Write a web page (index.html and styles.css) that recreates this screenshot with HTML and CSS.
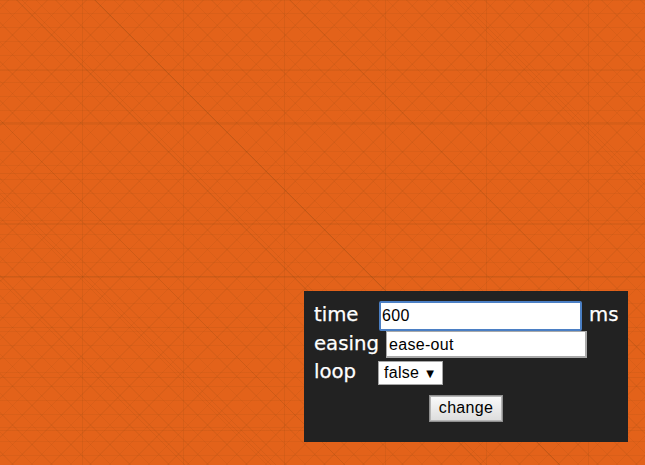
FILE: index.html
```html
<!DOCTYPE html>
<html lang="en">
<head>
<meta charset="utf-8">
<title>Animation settings</title>
<link rel="stylesheet" href="styles.css">
</head>
<body>
<form class="panel">
  <div class="row row-time">
    <label class="label label-time" for="time">time</label>
    <input class="field field-time" id="time" type="text" value="600">
    <span class="label unit">ms</span>
  </div>
  <div class="row row-easing">
    <label class="label label-easing" for="easing">easing</label>
    <input class="field field-easing" id="easing" type="text" value="ease-out">
  </div>
  <div class="row row-loop">
    <label class="label label-loop" for="loop">loop</label>
    <span class="select" id="loop">false<span class="arrow">▼</span></span>
  </div>
  <div class="actions">
    <button class="change" type="button">change</button>
  </div>
</form>
</body>
</html>
```

FILE: styles.css
```css
* { box-sizing: border-box; }
html, body { height: 100%; }
body {
  --line: rgba(110, 60, 10, .08);
  --accent: rgba(110, 60, 10, .1);
  --strong: rgba(110, 60, 10, .2);
  margin: 0;
  overflow: hidden;
  display: flex;
  justify-content: flex-end;
  align-items: flex-end;
  padding: 0 17px 23px 0;
  background-color: #e3621a;
  background-image:
    linear-gradient(45deg, transparent 395.4px, var(--strong) 395.4px 396.6px, transparent 396.6px),
    linear-gradient(45deg,
      transparent 130.3px, var(--accent) 130.3px 131.3px, transparent 131.3px 133.9px, var(--accent) 133.9px 134.9px,
      transparent 134.9px 191.1px, var(--accent) 191.1px 192.1px, transparent 192.1px 194.7px, var(--accent) 194.7px 195.7px,
      transparent 195.7px 243.4px, var(--accent) 243.4px 244.4px,
      transparent 244.4px 340.3px, var(--accent) 340.3px 341.3px, transparent 341.3px 343.9px, var(--accent) 343.9px 344.9px,
      transparent 344.9px 533.4px, var(--accent) 533.4px 534.4px,
      transparent 534.4px 650px, var(--accent) 650px 651px, transparent 651px 653.6px, var(--accent) 653.6px 654.6px,
      transparent 654.6px),
    repeating-linear-gradient(45deg, transparent 0 9px, var(--line) 9px 10px, transparent 10px 13.789px),
    repeating-linear-gradient(-45deg, transparent 0 6.2px, var(--line) 6.2px 7.2px, transparent 7.2px 13.789px),
    repeating-linear-gradient(180deg, var(--line) 0 .5px, transparent .5px 13.3px, var(--line) 13.3px 13.8px),
    repeating-linear-gradient(180deg, transparent 0 19.5px, var(--accent) 19.5px 20.5px, transparent 20.5px 69.5px, var(--accent) 69.5px 71px, transparent 71px 122.5px, var(--accent) 122.5px 124px, transparent 124px 153.5px),
    repeating-linear-gradient(90deg, transparent 0 81.6px, var(--accent) 81.6px 82.6px, transparent 82.6px 101.2px);
}
.panel {
  width: 324px;
  height: 151px;
  padding: 10px 0 0 10px;
  background: #222;
  color: #fff;
  font-family: "DejaVu Sans", sans-serif;
  font-size: 19.7px;
}
.row { display: flex; align-items: center; }
.label { line-height: 24px; -webkit-text-stroke: .25px #fff; }
.label-time { width: 65px; margin-bottom: 3px; }
.label-easing { width: 72px; margin-bottom: 2px; }
.label-loop { width: 64px; margin-bottom: 3px; }
.field, .select, .change {
  font-family: "Liberation Sans", sans-serif;
  font-size: 16px;
  letter-spacing: .3px;
  color: #000;
}
.field {
  display: block;
  flex: none;
  background: #fff;
  outline: 0;
  padding: 0 2px;
  border-radius: 0;
}
.row-time { height: 30px; }
.field-time {
  width: 203px;
  height: 30px;
  border: 2px solid #4b7fc4;
  border-radius: 2px;
  padding: 0 1px;
}
.unit { margin: 0 0 3px 7px; }
.row-easing { height: 27px; }
.field-easing {
  width: 201px;
  height: 27px;
  padding-top: 1px;
  border-style: solid;
  border-width: 1px 2px 2px 1px;
  border-color: #a9a9a9;
}
.row-loop { height: 24px; margin-top: 3px; }
.select {
  display: flex;
  align-items: center;
  width: 65px;
  height: 24px;
  padding-left: 5px;
  background: #fff;
  border: 1px solid #a6a6a6;
}
.arrow { font-size: 10px; margin-left: 7px; font-family: "DejaVu Sans", sans-serif; }
.actions { display: flex; justify-content: center; margin-top: 10px; width: 304px; }
.change {
  width: 74px;
  height: 27px;
  padding: 0 0 2px;
  border: 1px solid #8f8f8f;
  box-shadow: inset 0 0 0 1px #b5b5b5;
  background: linear-gradient(#fbfbfb, #dcdcdc);
}
```
